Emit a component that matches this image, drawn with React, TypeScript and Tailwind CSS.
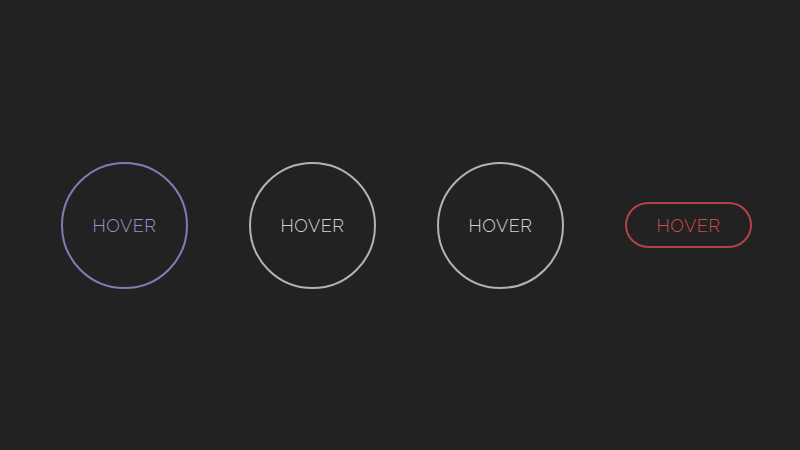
const buttons = [
  { shape: "rounded-full h-[127px]", color: "border-[#7f7db4] text-[#9795cc]" },
  { shape: "rounded-full h-[127px]", color: "border-[#b3b3b3] text-[#d2d2d2]" },
  { shape: "rounded-full h-[127px]", color: "border-[#b3b3b3] text-[#d2d2d2]" },
  { shape: "rounded-[23px] h-[46px]", color: "border-[#b24348] text-[#cc4b50]" },
]

const App = () => {
  return (
    <div className="w-[800px] h-[450px] bg-[#222222] flex items-center" style={{ fontFamily: "Raleway, Lato, 'Open Sans', sans-serif" }}>
      <div className="flex items-center gap-[61px] ml-[61px]">
        {buttons.map((b, i) => (
          <button
            key={i}
            className={`w-[127px] border-2 flex items-center justify-center text-[18px] font-light tracking-[0.6px] ${b.shape} ${b.color}`}
          >
            HOVER
          </button>
        ))}
      </div>
    </div>
  )
}

export default App
